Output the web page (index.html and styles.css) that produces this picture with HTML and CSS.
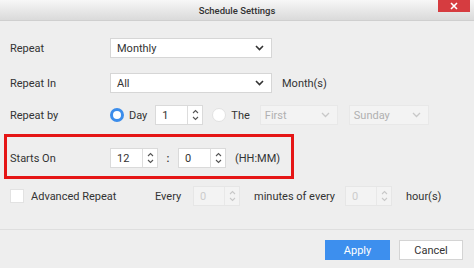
FILE: index.html
```html
<!DOCTYPE html>
<html>
<head>
<meta charset="utf-8">
<link rel="stylesheet" href="styles.css">
</head>
<body>
<div class="dialog">
  <div class="titlebar">
    <span class="title">Schedule Settings</span>
    <button class="close" aria-label="Close">
      <svg width="8" height="8" viewBox="0 0 8 8"><path d="M1 1L7 7M7 1L1 7" stroke="#fff" stroke-width="1.6"/></svg>
    </button>
  </div>
  <div class="content">
    <div class="row r1">
      <span class="label">Repeat</span>
      <div class="select wide"><span>Monthly</span><svg class="chev" width="9" height="6" viewBox="0 0 9 6"><path d="M1 1L4.5 4.5L8 1" fill="none" stroke="#333" stroke-width="1.6"/></svg></div>
    </div>
    <div class="row r2">
      <span class="label">Repeat In</span>
      <div class="select wide"><span>All</span><svg class="chev" width="9" height="6" viewBox="0 0 9 6"><path d="M1 1L4.5 4.5L8 1" fill="none" stroke="#333" stroke-width="1.6"/></svg></div>
      <span class="after">Month(s)</span>
    </div>
    <div class="row r3">
      <span class="label">Repeat by</span>
      <span class="radio on"></span><span class="rlabel">Day</span>
      <div class="spin"><span class="val">1</span><span class="arrows"><svg width="7" height="14" viewBox="0 0 7 14"><path d="M1 5L3.5 2.5L6 5M1 9L3.5 11.5L6 9" fill="none" stroke="#555" stroke-width="1.1"/></svg></span></div>
      <span class="radio off"></span><span class="rlabel">The</span>
      <div class="select dis first"><span>First</span><svg class="chev" width="9" height="6" viewBox="0 0 9 6"><path d="M1 1L4.5 4.5L8 1" fill="none" stroke="#c8c8c8" stroke-width="1.3"/></svg></div>
      <div class="select dis sunday"><span>Sunday</span><svg class="chev" width="9" height="6" viewBox="0 0 9 6"><path d="M1 1L4.5 4.5L8 1" fill="none" stroke="#c8c8c8" stroke-width="1.3"/></svg></div>
    </div>
    <div class="row highlight">
      <span class="label">Starts On</span>
      <div class="spin"><span class="val">12</span><span class="arrows"><svg width="7" height="14" viewBox="0 0 7 14"><path d="M1 5L3.5 2.5L6 5M1 9L3.5 11.5L6 9" fill="none" stroke="#555" stroke-width="1.1"/></svg></span></div>
      <span class="colon">:</span>
      <div class="spin"><span class="val">0</span><span class="arrows"><svg width="7" height="14" viewBox="0 0 7 14"><path d="M1 5L3.5 2.5L6 5M1 9L3.5 11.5L6 9" fill="none" stroke="#555" stroke-width="1.1"/></svg></span></div>
      <span class="hint">(HH:MM)</span>
    </div>
    <div class="row r5">
      <span class="check"></span>
      <span class="clabel">Advanced Repeat</span>
      <span class="every">Every</span>
      <div class="spin dis"><span class="val">0</span><span class="arrows"><svg width="7" height="14" viewBox="0 0 7 14"><path d="M1 5L3.5 2.5L6 5M1 9L3.5 11.5L6 9" fill="none" stroke="#c8c8c8" stroke-width="1.1"/></svg></span></div>
      <span class="mins">minutes of every</span>
      <div class="spin dis"><span class="val">0</span><span class="arrows"><svg width="7" height="14" viewBox="0 0 7 14"><path d="M1 5L3.5 2.5L6 5M1 9L3.5 11.5L6 9" fill="none" stroke="#c8c8c8" stroke-width="1.1"/></svg></span></div>
      <span class="hours">hour(s)</span>
    </div>
  </div>
  <div class="footer">
    <button class="btn apply">Apply</button>
    <button class="btn cancel">Cancel</button>
  </div>
</div>
</body>
</html>
```

FILE: styles.css
```css
* { box-sizing: border-box; }
html, body { margin: 0; padding: 0; }
body {
  width: 474px;
  height: 268px;
  overflow: hidden;
  background: #eeeeee;
  font-family: Roboto, "Liberation Sans", sans-serif;
  font-size: 11px;
  color: #333;
}
.dialog {
  width: 474px;
  height: 268px;
  display: flex;
  flex-direction: column;
  background: #eeeeee;
}
.titlebar {
  position: relative;
  height: 21px;
  flex: none;
  display: flex;
  align-items: center;
  justify-content: center;
  background: linear-gradient(#f7f7f7, #dadada);
  border-bottom: 1px solid #cfcfcf;
}
.title {
  font-size: 9.5px;
  font-weight: 500;
  color: #333;
}
.close {
  position: absolute;
  top: 0;
  left: 438px;
  width: 32px;
  height: 12px;
  border: none;
  padding: 0;
  background: #d63c40;
  display: flex;
  align-items: center;
  justify-content: center;
}
.content {
  flex: none;
  display: flex;
  flex-direction: column;
  padding-left: 10px;
}
.row {
  display: flex;
  align-items: center;
  height: 20px;
}
.r1 { margin-top: 17px; }
.r2 { margin-top: 15px; }
.r3 { margin-top: 12px; }
.label { width: 100px; flex: none; }
.select {
  height: 20px;
  background: #fff;
  border: 1px solid #d6d6d6;
  display: flex;
  align-items: center;
  justify-content: space-between;
  padding: 0 7px 0 6px;
}
.select.wide { width: 162px; }
.after { margin-left: 10px; }
.radio {
  width: 14px;
  height: 14px;
  border-radius: 50%;
  flex: none;
}
.radio.on { border: 3.5px solid #3c8deb; background: #fff; }
.radio.off { border: 1px solid #e2e2e2; background: #fff; margin-left: 9px; }
.rlabel { margin-left: 5px; margin-right: 8px; }
.spin {
  width: 48px;
  height: 20px;
  background: #fff;
  border: 1px solid #dadada;
  display: flex;
  flex: none;
}
.spin .val {
  flex: 1;
  padding-left: 6px;
  display: flex;
  align-items: center;
}
.spin .arrows {
  width: 15px;
  border-left: 1px solid #dddddd;
  display: flex;
  align-items: center;
  justify-content: center;
}
.select.dis {
  background: #f3f3f3;
  border-color: #e8e8e8;
  color: #b0b0b0;
  padding-left: 4px;
}
.first { width: 78px; margin-left: 2px; }
.sunday { width: 80px; margin-left: 11px; }
.highlight {
  margin-top: 9px;
  margin-left: -6px;
  width: 290px;
  height: 45px;
  border: 3px solid #e51515;
  padding: 3px 0 0 3px;
}
.colon { width: 20px; text-align: center; font-weight: 500; }
.hint { margin-left: 9px; }
.r5 { margin-top: 7px; }
.check {
  width: 14px;
  height: 14px;
  background: #fff;
  border: 1px solid #e2e2e2;
  flex: none;
}
.clabel { margin-left: 7px; width: 124px; }
.every { width: 38px; }
.spin.dis { background: #f3f3f3; border-color: #e6e6e6; color: #ccc; width: 47px; }
.spin.dis .arrows { border-left-color: #e8e8e8; }
.mins { margin-left: 14px; width: 91px; }
.hours { margin-left: 14px; }
.footer {
  margin-top: 23px;
  border-top: 1px solid #dedede;
  flex: 1;
  display: flex;
  justify-content: flex-end;
  align-items: flex-start;
  padding: 10px 11px 0 0;
  gap: 9px;
}
.btn {
  height: 20px;
  width: 65px;
  font-family: Roboto, "Liberation Sans", sans-serif;
  font-size: 11px;
  border: 1px solid #d4d4d4;
  padding: 0;
}
.apply { background: #3d8fee; border-color: #3d8fee; color: #fff; }
.cancel { background: #fff; color: #333; width: 64px; }
```
